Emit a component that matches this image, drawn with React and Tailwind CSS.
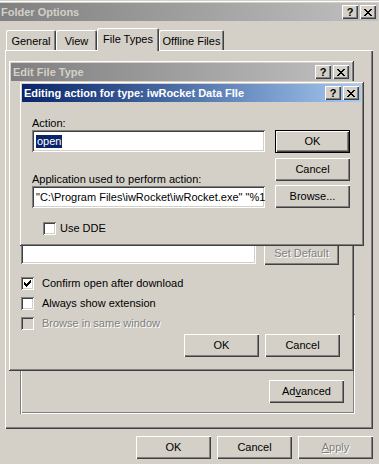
import React from "react";

// win2000 bevels
const frame =
  "shadow-[inset_1px_1px_0_#d4d0c8,inset_-1px_-1px_0_#404040,inset_2px_2px_0_#ffffff,inset_-2px_-2px_0_#808080]";
const raised =
  "shadow-[inset_1px_1px_0_#ffffff,inset_-1px_-1px_0_#404040,inset_-2px_-2px_0_#808080]";
const sunken =
  "shadow-[inset_1px_1px_0_#808080,inset_-1px_-1px_0_#ffffff,inset_2px_2px_0_#404040,inset_-2px_-2px_0_#d4d0c8]";
const etched =
  "shadow-[inset_1px_1px_0_#808080,inset_-1px_-1px_0_#ffffff,inset_2px_2px_0_#ffffff,inset_-2px_-2px_0_#808080]";
const disabledText = "text-[#808080] [text-shadow:1px_1px_0_#ffffff]";

const closeRows = [
  [0, 0, 2], [6, 0, 2],
  [1, 1, 2], [5, 1, 2],
  [2, 2, 4],
  [3, 3, 2],
  [2, 4, 4],
  [1, 5, 2], [5, 5, 2],
  [0, 6, 2], [6, 6, 2],
];

const checkRows = [
  [6, 0, 1],
  [5, 1, 2],
  [0, 2, 1], [4, 2, 3],
  [0, 3, 2], [3, 3, 3],
  [0, 4, 5],
  [1, 5, 3],
  [2, 6, 1],
];

const Pixels = ({ rows, w, h }) => (
  <svg width={w} height={h} viewBox={`0 0 ${w} ${h}`} shapeRendering="crispEdges">
    {rows.map(([x, y, len], i) => (
      <rect key={i} x={x} y={y} width={len} height="1" fill="#000" />
    ))}
  </svg>
);

const CaptionButton = ({ children }) => (
  <div className={`flex h-[14px] w-[16px] items-center justify-center bg-[#d4d0c8] ${raised}`}>
    {children}
  </div>
);

const TitleBar = ({ title, active }) => (
  <div
    className={`flex h-[18px] items-center justify-between pl-[2px] pr-[2px] ${
      active
        ? "bg-linear-to-r from-[#0a246a] to-[#a6caf0] text-white"
        : "bg-linear-to-r from-[#808080] to-[#c0c0c0] text-[#d4d0c8]"
    }`}
  >
    <span className="text-[11px] font-bold leading-none">{title}</span>
    <div className="flex gap-[2px]">
      <CaptionButton>
        <span className="text-[11px] font-bold leading-none text-black">?</span>
      </CaptionButton>
      <CaptionButton>
        <Pixels rows={closeRows} w={8} h={7} />
      </CaptionButton>
    </div>
  </div>
);

const Button = ({ children, isDefault, disabled, className = "" }) => (
  <div
    className={`flex h-[23px] w-[75px] items-center justify-center bg-[#d4d0c8] ${raised} ${
      isDefault ? "border border-black" : ""
    } ${disabled ? disabledText : "text-black"} ${className}`}
  >
    {children}
  </div>
);

const CheckBox = ({ checked, disabled }) => (
  <div
    className={`flex h-[13px] w-[13px] shrink-0 items-center justify-center ${sunken} ${
      disabled ? "bg-[#d4d0c8]" : "bg-white"
    }`}
  >
    {checked && <Pixels rows={checkRows} w={7} h={7} />}
  </div>
);

const CheckRow = ({ label, checked, disabled }) => (
  <div className="flex h-[13px] items-center gap-[8px]">
    <CheckBox checked={checked} disabled={disabled} />
    <span className={disabled ? disabledText : ""}>{label}</span>
  </div>
);

const tabs = [
  { name: "General", w: "w-[50px]" },
  { name: "View", w: "w-[41px]" },
  { name: "File Types", w: "w-[62px]", active: true },
  { name: "Offline Files", w: "w-[65px]" },
];

export default function App() {
  return (
    <div className="relative h-[464px] w-[379px] overflow-hidden bg-[#d4d0c8] font-['Liberation_Sans',Arial,sans-serif] text-[11px] leading-[13px] text-black">
      {/* Folder Options */}
      <div className={`ml-[-4px] h-[472px] w-[385px] p-[3px] ${frame}`}>
        <TitleBar title="Folder Options" />
        <div className="pl-[6px] pr-[5px]">
          <div className="mt-[7px] flex h-[22px] items-end pl-[1px]">
            {tabs.map((t) =>
              t.active ? (
                <div
                  key={t.name}
                  className={`relative z-10 mb-[-1px] flex h-[23px] items-start justify-center rounded-t-[2px] bg-[#d4d0c8] pt-[5px] shadow-[inset_1px_1px_0_#ffffff,inset_-1px_0_0_#404040,inset_-2px_0_0_#808080] ${t.w}`}
                >
                  {t.name}
                </div>
              ) : (
                <div
                  key={t.name}
                  className={`flex h-[20px] items-start justify-center rounded-t-[2px] pt-[5px] shadow-[inset_1px_1px_0_#ffffff,inset_-1px_0_0_#404040,inset_-2px_0_0_#808080] ${t.w}`}
                >
                  {t.name}
                </div>
              )
            )}
          </div>

          <div className={`flex h-[379px] flex-col justify-end pb-[15px] pl-[15px] pr-[18px] ${raised}`}>
            <div className={`flex h-[100px] items-end justify-end pb-[11px] pr-[11px] ${etched}`}>
              <Button>
                <span>
                  Ad<span className="underline">v</span>anced
                </span>
              </Button>
            </div>
          </div>

          <div className="mt-[7px] flex justify-end gap-[6px]">
            <Button>OK</Button>
            <Button>Cancel</Button>
            <Button disabled>
              <span>
                <span className="underline">A</span>pply
              </span>
            </Button>
          </div>
        </div>
      </div>

      {/* Edit File Type */}
      <div className={`absolute left-[8px] top-[60px] flex h-[311px] w-[346px] flex-col bg-[#d4d0c8] p-[3px] ${frame}`}>
        <TitleBar title="Edit File Type" />
        <div className="flex flex-1 flex-col justify-end pb-[11px] pl-[10px]">
          <div className="flex items-start gap-[8px]">
            <div className={`mt-[1px] h-[21px] w-[235px] bg-white ${sunken}`} />
            <Button disabled>Set Default</Button>
          </div>
          <div className="mt-[12px] flex flex-col gap-[7px]">
            <CheckRow label="Confirm open after download" checked />
            <CheckRow label="Always show extension" />
            <CheckRow label="Browse in same window" disabled />
          </div>
          <div className="mt-[4px] flex justify-end gap-[6px] pr-[11px]">
            <Button>OK</Button>
            <Button>Cancel</Button>
          </div>
        </div>
      </div>

      {/* Editing action */}
      <div className={`absolute left-[19px] top-[81px] flex h-[165px] w-[345px] flex-col bg-[#d4d0c8] p-[3px] ${frame}`}>
        <TitleBar title="Editing action for type: iwRocket Data FIle" active />
        <div className="flex gap-[10px] pl-[10px]">
          <div className="flex w-[233px] flex-col">
            <div className="mt-[15px]">Action:</div>
            <div className={`flex h-[22px] items-center bg-white pl-[4px] ${sunken}`}>
              <span className="bg-[#0a246a] px-[1px] text-white">open</span>
            </div>
            <div className="mt-[21px]">Application used to perform action:</div>
            <div className={`flex h-[22px] items-center overflow-hidden whitespace-nowrap bg-white pl-[4px] ${sunken}`}>
              {'"C:\\Program Files\\iwRocket\\iwRocket.exe" "%1"'}
            </div>
            <div className="ml-[11px] mt-[14px] flex h-[13px] items-center gap-[4px]">
              <CheckBox />
              <span>Use DDE</span>
            </div>
          </div>
          <div className="flex flex-col">
            <Button isDefault className="mt-[28px]">OK</Button>
            <Button className="mt-[5px]">Cancel</Button>
            <Button className="mt-[4px]">Browse...</Button>
          </div>
        </div>
      </div>
    </div>
  );
}
